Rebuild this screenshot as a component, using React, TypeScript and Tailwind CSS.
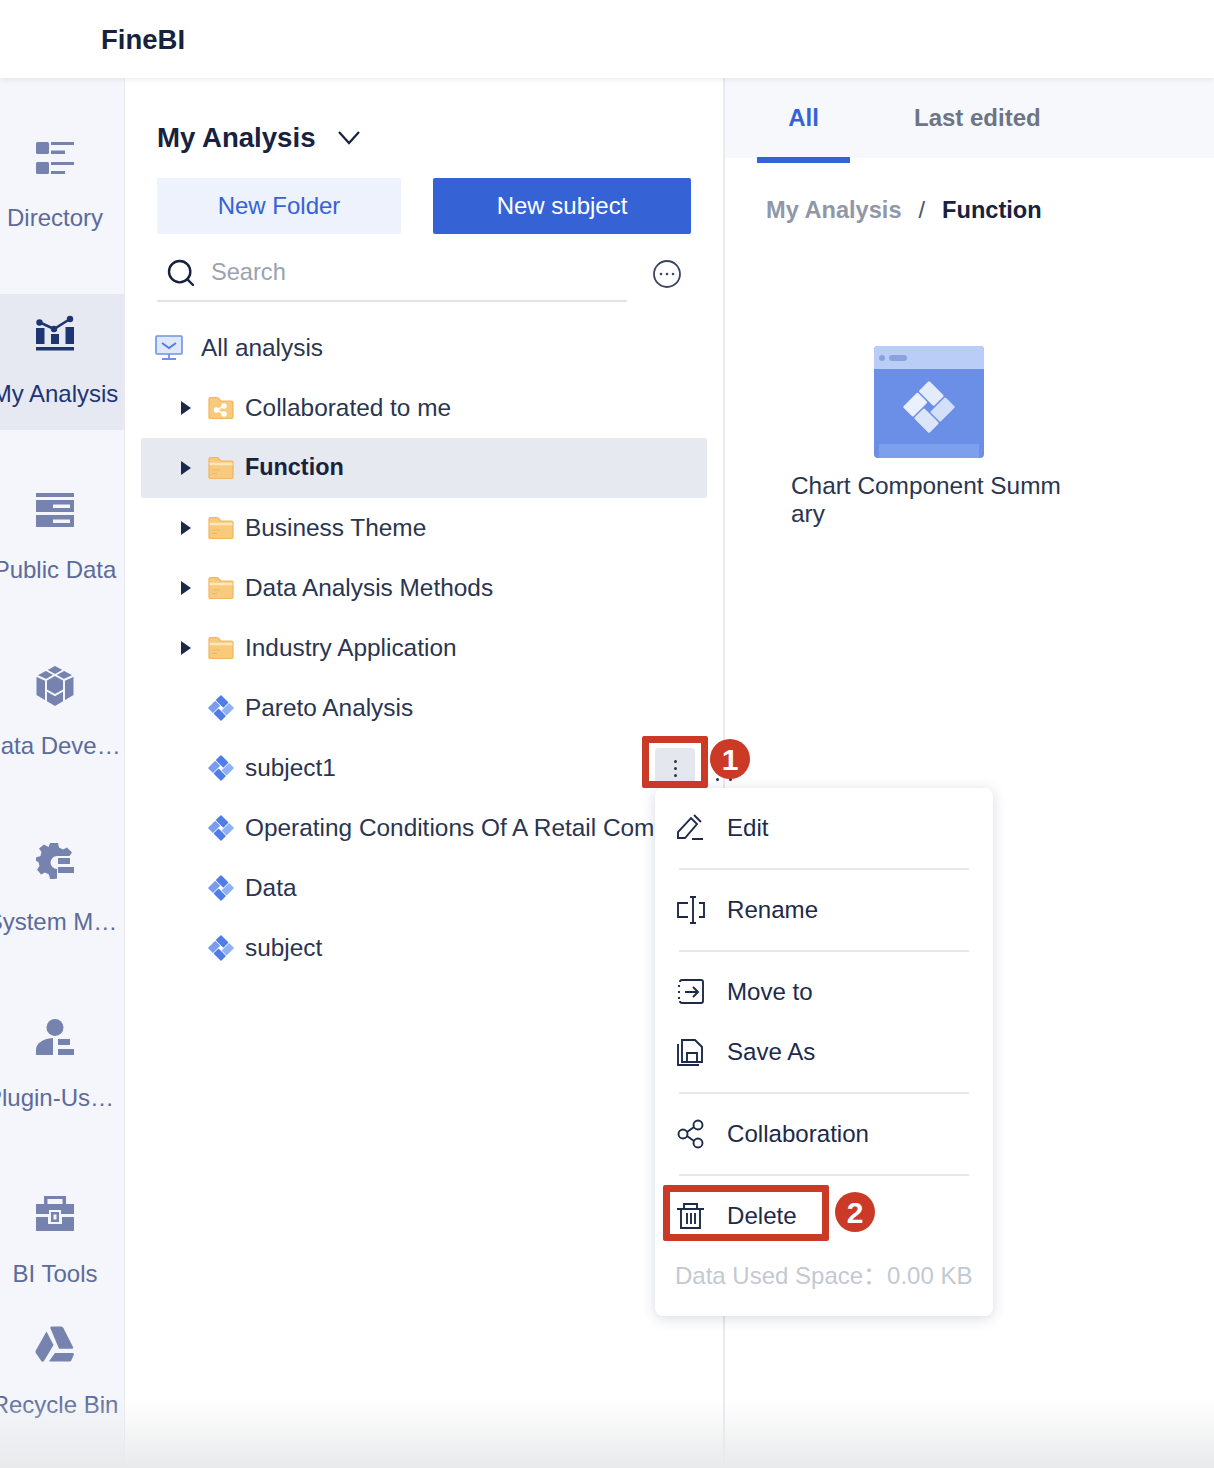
import { Search } from "lucide-react";
import type { ReactNode } from "react";

const navBg = "#f4f6fb";

const navIcons: Record<string, ReactNode> = {
  directory: (
    <>
      <rect x="1" y="4" width="13" height="12" rx="1.5" />
      <rect x="16" y="4" width="23" height="3" />
      <rect x="16" y="12.5" width="14" height="3.5" />
      <rect x="1" y="24" width="13" height="12" rx="1.5" />
      <rect x="16" y="24" width="23" height="3" />
      <rect x="16" y="33" width="14" height="3" />
    </>
  ),
  analysis: (
    <>
      <path d="M4 8 L19 15 L35 5" fill="none" stroke="currentColor" strokeWidth="2.6" />
      <circle cx="4.5" cy="8.500" r="3.2" />
      <circle cx="19" cy="15" r="3.2" />
      <circle cx="35" cy="5" r="3.2" />
      <rect x="1" y="14" width="8.500" height="16" />
      <rect x="16" y="20" width="8" height="10" />
      <rect x="30.500" y="13" width="8.500" height="17" />
      <rect x="1" y="33" width="38" height="3.5" />
    </>
  ),
  publicData: (
    <>
      <rect x="1" y="3" width="38" height="4" />
      <path fillRule="evenodd" d="M1 10h38v12H1z M18 14.500v3.500h17v-3.500z" />
      <path fillRule="evenodd" d="M1 25h38v12H1z M18 29.500v3.500h17v-3.500z" />
    </>
  ),
  dev: (
    <>
      <path d="M20 0 L38.500 10 L38.500 29 L20 40 L1.500 29 L1.500 10 Z" />
      <path
        d="M20 9 L29 14 L29 24 L20 29 L11 24 L11 14 Z M20 9 L11 4 M20 9 L29 4 M11 14 L1 9.500 M29 14 L39 9.500 M11 24 L11 36 M29 24 L29 36"
        fill="none"
        stroke={navBg}
        strokeWidth="2"
      />
    </>
  ),
  system: (
    <>
      <path d="M15 1h8l1 4.500 4 2 4-2 5 5-2.500 3.500H22a6.500 6.500 0 1 0 0 13v9.500L19 37h-4l-1-4.500-4-2-4 2-4-5 2.500-3.500-1-4L1 19v-3.500L5.500 14l1-4L4 6.500l5-4 4.500 2.500L14 4z" />
      <rect x="23" y="16" width="12" height="6" />
      <rect x="23" y="25" width="16" height="6" />
    </>
  ),
  plugin: (
    <>
      <circle cx="20" cy="9.500" r="8.500" />
      <path d="M1 37v-5.500C1 26 7 20.500 18 20v17z" />
      <rect x="23" y="21" width="12" height="6" />
      <rect x="23" y="31" width="16" height="6" />
    </>
  ),
  tools: (
    <>
      <path fillRule="evenodd" d="M9 2h22v8h8v10H26v-4H14v4H1V10h8z M12.500 5v5h15V5z" />
      <path fillRule="evenodd" d="M16 18h8v10h-8z M18.500 20.500v5h3v-5z" />
      <path d="M1 23h12v7h14v-7h12v14H1z" />
    </>
  ),
  recycle: (
    <>
      <path d="M16.500 1.500h9c1.500 0 2.300.6 3 1.800L38 22c.4 1 0 1.800-1.200 1.800H24L15.500 3.500c-.4-1 0-2 1-2z" />
      <path d="M11.500 6.500 L18.500 20 L9 36c-.7 1-2 1-2.700 0L.8 28c-.5-.8-.5-1.600 0-2.500z" />
      <path d="M14.500 35.500 L20 28h17.500c1.200 0 1.700.8 1.300 1.800L36.500 35c-.5 1-1.200 1.600-2.300 1.600H15.500c-1 0-1.500-.5-1-1.100z" />
    </>
  ),
};

const navItems = [
  { key: "directory", label: "Directory", shift: "" },
  { key: "analysis", label: "My Analysis", shift: "", active: true },
  { key: "publicData", label: "Public Data", shift: "" },
  { key: "dev", label: "Data Deve…", shift: "ml-[-6px]" },
  { key: "system", label: "System M…", shift: "ml-[-6px]" },
  { key: "plugin", label: "Plugin-Us…", shift: "ml-[-10px]" },
  { key: "tools", label: "BI Tools", shift: "" },
];

function NavItem({ item, className = "" }: { item: { key: string; label: string; shift: string; active?: boolean }; className?: string }) {
  return (
    <div
      className={`h-[136px] pt-[20px] pr-[14px] flex flex-col items-center ${
        item.active ? "bg-[#e6e9f2] text-[#1d3573]" : "text-[#5c6b9a]"
      } ${className}`}
    >
      <svg viewBox="0 0 40 40" className={`w-[40px] h-[40px] shrink-0 fill-current ${item.active ? "" : "text-[#7583ae]"}`}>
        {navIcons[item.key]}
      </svg>
      <span className={`mt-[26px] text-[24px] leading-[28px] whitespace-nowrap ${item.shift}`}>{item.label}</span>
    </div>
  );
}

function Folder({ share }: { share?: boolean }) {
  return (
    <svg viewBox="0 0 26 24" className="w-[26px] h-[24px] shrink-0">
      <path d="M1 3c0-1 .6-1.500 1.500-1.500h7L13 5h10.500c1 0 1.500.6 1.500 1.500V21c0 1-.6 1.500-1.500 1.500h-21C1.600 22.500 1 22 1 21z" fill="#f7ca7c" stroke="#efb560" strokeWidth="1.200" />
      {share ? (
        <g fill="none" stroke="#fff" strokeWidth="1.500">
          <path d="M9 14l6-3.500M9 14l6 3.500" />
          <circle cx="8.500" cy="14" r="2" fill="#fff" />
          <circle cx="16" cy="10" r="2" fill="#fff" />
          <circle cx="16" cy="18" r="2" fill="#fff" />
        </g>
      ) : (
        <>
          <path d="M1.500 8h23" stroke="#fbe7bd" strokeWidth="2.500" />
          <path d="M4 14h8M4 17.500h5" stroke="#eeb560" strokeWidth="1.200" />
        </>
      )}
    </svg>
  );
}

// Four bars wound round a small centre, turned 45 degrees
function Diamond({ className, fills }: { className: string; fills: string[] }) {
  return (
    <svg viewBox="0 0 28 28" className={className}>
      <g transform="rotate(45 14 14)">
        <rect x="4" y="4" width="11.500" height="8" rx="0.800" fill={fills[0]} />
        <rect x="16.300" y="4" width="7.700" height="11.500" rx="0.800" fill={fills[1]} />
        <rect x="12.500" y="16.300" width="11.500" height="7.700" rx="0.800" fill={fills[2]} />
        <rect x="4" y="12.800" width="7.700" height="11.200" rx="0.800" fill={fills[3]} />
      </g>
    </svg>
  );
}

function Caret() {
  return (
    <svg viewBox="0 0 10 14" className="w-[10px] h-[14px] shrink-0 fill-[#1b2a4a]">
      <path d="M0 0v14l10-7z" />
    </svg>
  );
}

const treeFolders = ["Function", "Business Theme", "Data Analysis Methods", "Industry Application"];
const treeSubjects = ["Pareto Analysis", "subject1", "Operating Conditions Of A Retail Company", "Data", "subject"];
const diamondFills = ["#4f7de8", "#8fb0f2", "#4f7de8", "#7a9cec"];

function Tree() {
  return (
    <div className="mt-[16px] flex flex-col text-[24.4px] text-[#2a3550]">
      <div className="h-[60px] flex items-center pl-[30px] gap-[18px]">
        <svg viewBox="0 0 28 26" className="w-[28px] h-[26px]" fill="none">
          <rect x="1" y="1" width="26" height="18" rx="1" fill="#dfe8fb" stroke="#6f92e6" strokeWidth="1.600" />
          <path d="M7 8l7 5 7-5" stroke="#4f7de8" strokeWidth="2" />
          <path d="M14 19v4M7 24h14" stroke="#6f92e6" strokeWidth="1.800" />
        </svg>
        <span>All analysis</span>
      </div>
      <div className="h-[60px] flex items-center pl-[56px] gap-[17px]">
        <Caret />
        <Folder share />
        <span className="-ml-[6px]">Collaborated to me</span>
      </div>
      {treeFolders.map((name) => (
        <div
          key={name}
          className={`h-[60px] flex items-center pl-[40px] gap-[17px] mx-[16px] rounded-[3px] ${
            name === "Function" ? "bg-[#e6e9ef] font-bold text-[23.4px] text-[#17223f]" : ""
          }`}
        >
          <Caret />
          <Folder />
          <span className="-ml-[6px]">{name}</span>
        </div>
      ))}
      {treeSubjects.map((name) => (
        <div key={name} className="h-[60px] flex items-center pl-[83px] gap-[11px] whitespace-nowrap">
          <Diamond className="w-[26px] h-[26px] shrink-0" fills={diamondFills} />
          <span>{name}</span>
        </div>
      ))}
    </div>
  );
}

function MenuRow({ icon, label }: { icon: ReactNode; label: string }) {
  return (
    <div className="h-[60px] flex items-center pl-[21px] gap-[21px] text-[24.1px] text-[#1d2a4a]">
      <svg viewBox="0 0 30 30" className="w-[30px] h-[30px] shrink-0" fill="none" stroke="#1d2a4a" strokeWidth="1.900">
        {icon}
      </svg>
      <span>{label}</span>
    </div>
  );
}

function MenuDivider() {
  return <div className="h-[2px] my-[10px] mx-[24px] bg-[#e6e8ee]" />;
}

function ContextMenu() {
  return (
    <div className="absolute left-[655px] top-[788px] w-[338px] h-[528px] pt-[10px] rounded-[8px] bg-white shadow-[0_2px_14px_rgba(40,50,90,0.18)]">
      <MenuRow label="Edit" icon={<path d="M2 25v-6L15 5l6 6L9 25zM18 2l7 7M16 26h11" />} />
      <MenuDivider />
      <MenuRow label="Rename" icon={<path d="M12 8H2v14h10M23 8h5v14h-5M14 2h6M14 28h6M17 2v26" />} />
      <MenuDivider />
      <MenuRow
        label="Move to"
        icon={<path d="M4 5c0-1 .5-2 2-2h19c1 0 2 1 2 2v19c0 1-1 2-2 2H6c-1 0-2-1-2-2M3 8v2M3 14v2M3 20v2M9 15h13M17 10l5 5-5 5" />}
      />
      <MenuRow label="Save As" icon={<path d="M6 3h13l7 7v15H6zM2 7v21h21M11 25v-9h10v9" />} />
      <MenuDivider />
      <MenuRow
        label="Collaboration"
        icon={
          <>
            <circle cx="7" cy="15" r="4.500" />
            <circle cx="22" cy="6" r="4.500" />
            <circle cx="22" cy="24" r="4.500" />
            <path d="M11 13l7-5M11 17l7 5" />
          </>
        }
      />
      <MenuDivider />
      <MenuRow label="Delete" icon={<path d="M1 8h27M8 8V3h13v5M5 8v19h19V8M11 12v11M15 12v11M19 12v11" />} />
      <div className="mt-[15px] pl-[20px] text-[24px] leading-[30px] text-[#c3c9d3] whitespace-nowrap">Data Used Space：0.00 KB</div>
    </div>
  );
}

function Badge({ n, className }: { n: number; className: string }) {
  return (
    <div className={`absolute w-[40px] h-[40px] rounded-full bg-[#cb3a26] text-white text-[30px] font-bold flex items-center justify-center ${className}`}>
      {n}
    </div>
  );
}

export default function App() {
  return (
    <div className="relative w-[1214px] h-[1468px] overflow-hidden bg-white flex flex-col font-['Liberation_Sans','Noto_Sans_CJK_SC',sans-serif]">
      {/* Header */}
      <header className="relative z-10 h-[78px] shrink-0 flex items-center pl-[101px] pt-[2px] bg-white shadow-[0_1px_6px_rgba(40,50,90,0.1)]">
        <span className="text-[27.5px] font-bold text-[#17223f]">FineBI</span>
      </header>

      <div className="flex-1 flex min-h-0">
        {/* Side nav */}
        <nav className="w-[125px] shrink-0 pt-[40px] flex flex-col gap-[40px] bg-[#f4f6fb] border-r border-[#e8eaf0] overflow-hidden">
          {navItems.map((item) => (
            <NavItem key={item.key} item={item} />
          ))}
          <NavItem item={{ key: "recycle", label: "Recycle Bin", shift: "" }} className="-mt-[45px]" />
        </nav>

        {/* Analysis panel */}
        <section className="w-[600px] shrink-0 border-r-2 border-[#e8eaf0] pt-[40px]">
          <div className="pl-[32px] flex items-center h-[40px] gap-[22px] text-[#17223f]">
            <span className="text-[27.6px] font-bold">My Analysis</span>
            <svg viewBox="0 0 24 16" className="w-[24px] h-[16px]" fill="none" stroke="#17223f" strokeWidth="2.200">
              <path d="M2 2l10 11L22 2" />
            </svg>
          </div>
          <div className="mt-[20px] pl-[32px] flex gap-[32px] text-[24px]">
            <button className="w-[244px] h-[56px] rounded-[2px] bg-[#edf2fc] text-[#3563d6]">New Folder</button>
            <button className="w-[258px] h-[56px] rounded-[2px] bg-[#3563d6] text-white">New subject</button>
          </div>
          <div className="mt-[10px] pl-[32px] flex items-center">
            <div className="w-[470px] h-[58px] border-b-2 border-[#dfe2e8] flex items-center pl-[8px] pt-[2px] gap-[14px] text-[23.600px] text-[#9aa2b1]">
              <Search className="w-[32px] h-[32px] text-[#17223f]" strokeWidth={1.800} />
              <span>Search</span>
            </div>
            <svg viewBox="0 0 30 30" className="ml-[25px] mt-[2px] w-[30px] h-[30px]" fill="none" stroke="#3a4560" strokeWidth="1.800">
              <circle cx="15" cy="15" r="13" />
              <circle cx="9" cy="15" r="1.300" fill="#3a4560" stroke="none" />
              <circle cx="15" cy="15" r="1.300" fill="#3a4560" stroke="none" />
              <circle cx="21" cy="15" r="1.300" fill="#3a4560" stroke="none" />
            </svg>
          </div>
          <Tree />
        </section>

        {/* Content panel */}
        <section className="flex-1 min-w-0">
          <div className="h-[80px] pl-[32px] flex bg-[#f7f8fb] text-[24px] font-bold">
            <div className="w-[93px] flex items-center justify-center text-[#3563d6] border-b-[6px] border-[#3563d6] h-[85px] pt-[1px]">All</div>
            <div className="ml-[64px] flex items-center text-[#6c7486]">Last edited</div>
          </div>
          <div className="mt-[38px] pl-[41px] flex items-center gap-[17px] text-[23.600px] leading-[28px] font-bold text-[#8f97a8]">
            <span>My Analysis</span>
            <span className="font-normal text-[#4a5468]">/</span>
            <span className="text-[#17223f]">Function</span>
          </div>
          <div className="mt-[122px] pl-[66px] w-[346px]">
            <div className="ml-[83px] w-[110px] h-[112px] rounded-[4px] overflow-hidden flex flex-col bg-[#6b8fe6]">
              <div className="h-[23px] shrink-0 bg-[#b9cdf7] flex items-center pl-[5px] gap-[4px]">
                <div className="w-[6px] h-[6px] rounded-full bg-[#8aa3dd]" />
                <div className="w-[18px] h-[6px] rounded-full bg-[#8aa3dd]" />
              </div>
              <div className="flex-1 flex items-center justify-center">
                <Diamond className="w-[52px] h-[52px]" fills={["#e4ecfc", "#d3e0fa", "#dbe6fb", "#eaf0fd"]} />
              </div>
              <div className="h-[14px] shrink-0 mx-[5px] bg-[#7e9feb]" />
            </div>
            <div className="mt-[14px] text-[24.4px] leading-[28px] text-[#2a3550] break-all">Chart Component Summary</div>
          </div>
        </section>
      </div>

      {/* Hover button under the first callout */}
      <div className="absolute left-[655px] top-[748px] w-[40px] h-[40px] rounded-t-[4px] bg-[#e4e7ed] flex flex-col items-center justify-center gap-[4px]">
        <div className="w-[3px] h-[3px] rounded-full bg-[#2a3550]" />
        <div className="w-[3px] h-[3px] rounded-full bg-[#2a3550]" />
        <div className="w-[3px] h-[3px] rounded-full bg-[#2a3550]" />
      </div>
      <div className="absolute left-[716px] top-[778px] w-[3px] h-[3px] rounded-full bg-[#2a3550]" />
      <div className="absolute left-[729px] top-[778px] w-[3px] h-[3px] rounded-full bg-[#2a3550]" />

      <ContextMenu />

      {/* Callouts */}
      <div className="absolute left-[642px] top-[736px] w-[66px] h-[52px] border-[7px] border-[#cb3a26] rounded-[2px]" />
      <Badge n={1} className="left-[710px] top-[739px]" />
      <div className="absolute left-[663px] top-[1185px] w-[166px] h-[56px] border-[7px] border-[#cb3a26] rounded-[2px]" />
      <Badge n={2} className="left-[835px] top-[1192px]" />

      {/* Bottom fade */}
      <div className="absolute inset-x-0 bottom-0 h-[70px] bg-gradient-to-b from-transparent to-[#e9eaeb] pointer-events-none" />
    </div>
  );
}
